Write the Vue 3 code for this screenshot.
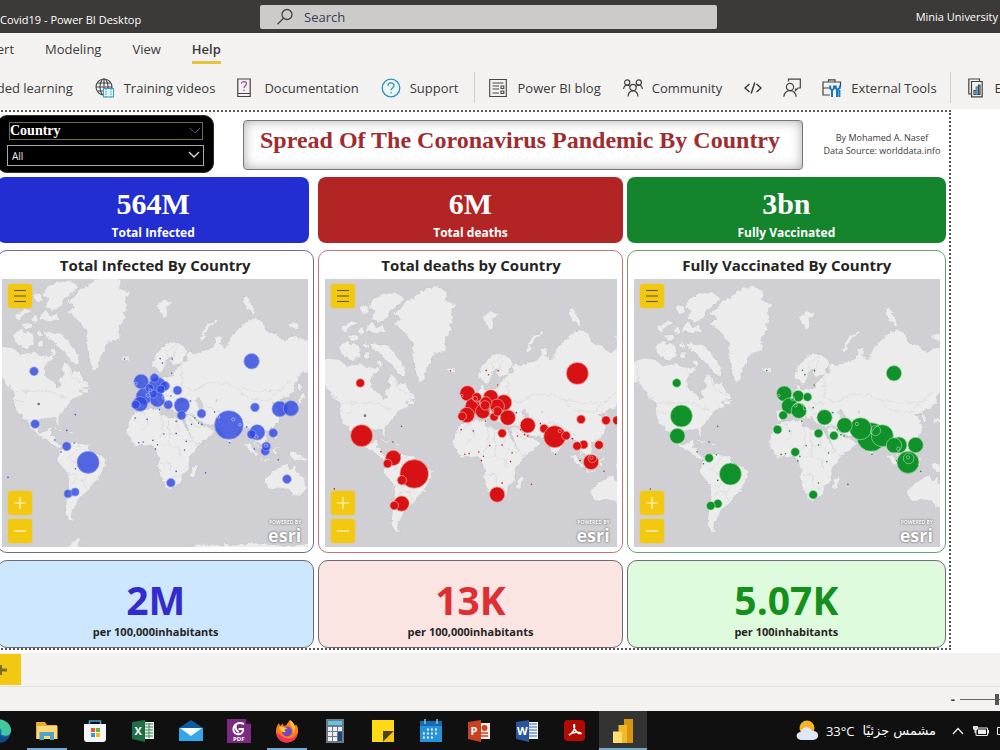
<script setup>
import { ref } from 'vue'

const query = ref('')
const zoom = ref(36)

const land = [
  // Greenland and the Arctic archipelago
  'M302 95L337 90 367 105 357 130 392 145 377 165 382 185 372 205 377 220 357 240 360 285 327 290 310 325 300 345 292 375 279 375 267 350 262 320 257 255 240 232 204 203 220 185 204 172 225 150 257 125Z',
  'M142 125L172 110 212 110 237 125 219 145 192 165 182 190 152 200 134 184 146 165 127 150Z',
  'M98 150L122 140 130 165 118 176 104 168ZM44 215L70 195 92 192 96 206 70 212 50 232ZM92 225L108 210 118 222 106 236ZM120 205L145 198 150 214 170 206 178 224 150 232 122 226ZM66 238L92 234 98 250 72 252Z',
  'M37 272L60 255 82 262 100 270 104 300 82 312 58 304 45 296ZM108 262L124 256 130 272 118 282ZM110 290L128 290 130 306 114 308ZM134 258L160 262 190 268 202 290 226 318 236 338 232 362 212 352 196 326 170 304 152 286 136 280ZM148 312L168 312 172 328 154 330Z',
  // North and Central America
  'M-30 318L-14 310 6 305 40 310 65 328 100 322 130 338 158 326 165 343 145 354 132 372 140 398 162 410 170 430 180 425 176 405 190 392 184 366 196 352 212 366 218 386 234 372 246 396 265 418 262 434 236 438 254 448 228 458 206 475 200 490 186 505 174 522 179 542 172 542 164 522 140 520 116 526 108 546 120 565 138 562 147 550 156 552 150 570 166 575 166 590 180 604 192 600 194 608 176 612 158 600 138 584 110 572 94 550 84 532 78 524 86 548 76 524 60 510 45 490 38 462 42 442 28 430 4 400 -10 384 -30 375Z',
  'M160 548L184 552 200 558 186 560 166 554ZM206 560L222 562 218 568 206 566ZM246 428L266 430 264 446 248 444Z',
  // South America
  'M190 600L215 590 235 595 260 600 275 622 300 630 319 645 312 665 302 690 295 706 276 722 264 740 250 750 240 757 236 770 222 785 216 805 214 815 224 830 206 826 194 805 197 775 203 740 208 710 205 688 185 666 170 645 175 625 187 612Z',
  // Africa and Madagascar
  'M400 505L425 495 455 492 480 492 482 510 505 515 530 520 545 520 556 545 568 565 580 587 607 580 600 600 578 625 564 645 568 670 546 690 545 706 528 725 505 735 494 725 480 690 471 665 478 640 465 620 460 605 430 600 405 603 385 580 378 555 390 530Z',
  'M590 655L592 670 580 700 570 696 572 675Z',
  // Arabia
  'M553 515L580 512 590 530 608 545 625 546 641 560 632 575 610 590 590 600 578 590 565 560Z',
  // Europe and Asia
  'M402 462L436 466 432 446 418 440 440 430 456 414 462 388 470 384 474 396 492 400 512 394 520 380 536 368 546 350 560 345 560 318 584 328 602 318 626 314 642 300 650 272 664 276 660 300 676 312 688 292 695 270 722 245 745 225 768 218 792 234 796 260 828 266 850 290 878 274 930 290 930 385 902 386 896 404 880 420 884 440 862 458 838 466 850 480 852 500 842 498 836 474 822 474 832 490 838 512 836 532 818 550 796 560 800 584 792 604 778 594 768 588 776 618 768 612 758 572 742 548 734 546 714 560 700 582 690 602 678 590 664 560 650 546 634 540 614 538 596 528 580 512 556 508 530 506 514 494 508 482 504 496 492 476 478 462 492 484 484 490 468 468 454 466 438 476 430 492 404 492Z',
  'M454 366L458 340 478 316 494 298 516 290 540 300 560 318 552 346 530 362 514 360 516 336 506 340 494 366 484 388 474 376 464 372Z',
  'M422 388L432 390 432 404 442 418 436 426 420 428 424 412 416 400ZM404 410L416 406 416 424 404 426ZM358 340L372 332 388 338 384 350 366 352Z',
  'M466 180L490 166 518 168 512 182 498 188 506 210 490 222 482 204ZM726 158L740 152 748 170 766 196 764 210 744 196 730 176ZM866 238L884 232 898 242 884 252 870 248Z',
  'M600 290L604 268 616 244 650 222 652 228 624 248 614 268 612 288Z',
  // Pacific islands and Australia
  'M896 410L904 420 900 446 894 430ZM900 452L918 446 914 462 904 468 896 490 874 504 870 498 888 484ZM814 552L826 560 830 584 822 588ZM730 590L744 596 776 630 770 638 748 618ZM774 640L812 644 808 650 778 646ZM784 608L806 590 814 604 808 626 790 624ZM818 606L836 604 826 614 832 630 820 628ZM866 620L886 624 912 634 926 652 904 646 884 648 868 632Z',
  'M795 700L802 690 830 674 850 658 862 660 870 676 880 654 890 680 912 704 918 728 902 755 880 752 866 734 842 730 806 736 796 718ZM892 764L904 764 898 774Z',
  'M200 910L228 884 250 876 232 896 240 912ZM560 912L600 898 700 900 770 894 850 904 930 896 930 912Z'
]

const water = 'M528 466L545 458 566 466 570 474 550 474 534 474ZM584 466L600 458 604 474 612 496 602 502 594 484ZM640 464L652 462 650 474Z'
const borders = 'M-14 310V384M42 440H150L175 450 200 462M40 462L75 470M78 524L108 534M196 350L220 400 260 420M205 640L225 620 240 600M208 690L230 690 240 670 225 650 205 640M215 720L230 700 250 710 262 740M250 710L262 700 262 690M430 505L400 530M430 498L445 540 420 560M482 510L490 560 470 590M505 516V600M530 520L532 568 505 568M545 580L575 590M490 600L540 610 540 640M480 655H510V690M520 700L545 690M528 500L560 500 580 512M560 515L585 545 625 548M580 440L620 415 680 415 710 430 770 440 840 435 870 410M710 430L740 460 800 470 840 435M610 480L650 500 690 500 720 520 750 535M640 540L660 510M500 405L510 440 545 440M470 410L490 440 520 480M440 466L460 448M545 350V420L580 440M494 366L500 320 530 300M520 340L530 310'

const dots = [[373, 343], [226, 510], [200, 557], [164, 586], [183, 622], [226, 672], [222, 595], [24, 698], [405, 520], [441, 524], [491, 568], [528, 566], [416, 594], [429, 592], [458, 587], [472, 600], [466, 613], [558, 590], [553, 616], [528, 680], [616, 684], [528, 530], [574, 539], [595, 535], [605, 539], [584, 520], [643, 502], [571, 469], [516, 343], [487, 355], [480, 342], [515, 386], [512, 454], [478, 495], [688, 594], [762, 613], [834, 645], [739, 547]]

const maps = [
  {
    key: 'infected', title: 'Total Infected By Country', view: '6 100 918 810', shift: [0, 0],
    bubbles: [[102, 380, 13], [105, 538, 13], [200, 605, 13], [264, 653, 33], [204, 747, 12], [225, 742, 12], [512, 714, 13], [754, 350, 23], [686, 541, 43], [764, 488, 13], [838, 493, 23], [872, 491, 23], [604, 507, 13], [545, 482, 23], [544, 512, 13], [532, 437, 13], [423, 411, 22], [472, 424, 26], [432, 455, 24], [420, 478, 22], [407, 480, 13], [472, 465, 22], [463, 400, 13], [494, 424, 14], [448, 430, 12], [482, 434, 12], [459, 448, 12], [504, 480, 13], [771, 563, 23], [754, 569, 13], [819, 565, 13], [795, 619, 13], [798, 605, 13], [860, 703, 13]],
    rings: [[407, 417, 4], [451, 437, 5], [444, 452, 6], [499, 464, 5], [490, 458, 4], [508, 460, 4], [699, 524, 5], [719, 540, 4], [655, 517, 4], [797, 603, 5], [768, 576, 5]]
  },
  {
    key: 'deaths', title: 'Total deaths by Country', view: '-4 65 875 810', shift: [-43, -35],
    bubbles: [[145, 415, 13], [149, 573, 33], [244, 640, 23], [227, 657, 13], [307, 688, 43], [270, 707, 14], [269, 777, 23], [247, 783, 13], [556, 750, 23], [797, 386, 33], [467, 446, 23], [537, 457, 22], [576, 474, 24], [484, 485, 24], [513, 500, 22], [556, 485, 22], [495, 458, 14], [522, 474, 18], [520, 482, 14], [465, 511, 23], [451, 515, 13], [547, 516, 13], [557, 500, 14], [588, 519, 23], [571, 566, 13], [648, 542, 23], [697, 552, 13], [729, 576, 33], [763, 573, 13], [808, 524, 13], [883, 527, 13], [916, 527, 13], [816, 600, 13], [796, 604, 13], [862, 601, 13], [838, 652, 23]],
    rings: [[450, 453, 4], [490, 462, 7], [500, 474, 5], [540, 500, 6], [533, 498, 4], [744, 559, 5], [842, 641, 13], [839, 639, 5]]
  },
  {
    key: 'vaccinated', title: 'Fully Vaccinated By Country', view: '-25 65 918 810', shift: [-64, -35],
    bubbles: [[167, 415, 13], [181, 514, 33], [169, 574, 23], [264, 640, 13], [328, 688, 33], [290, 777, 13], [269, 783, 13], [576, 750, 13], [818, 386, 23], [489, 447, 23], [531, 454, 17], [559, 457, 13], [505, 484, 24], [533, 498, 23], [486, 512, 13], [610, 518, 23], [469, 555, 13], [592, 566, 13], [638, 573, 13], [522, 622, 13], [750, 577, 43], [718, 552, 33], [670, 542, 23], [783, 573, 33], [833, 601, 24], [818, 602, 23], [883, 601, 23], [860, 653, 33]],
    rings: [[473, 453, 4], [515, 462, 6], [523, 482, 5], [545, 478, 5], [552, 490, 6], [707, 538, 5], [763, 558, 15], [831, 612, 5], [862, 641, 16], [860, 638, 5]]
  }
]

const totals = [
  { key: 'infected', value: '564M', label: 'Total Infected' },
  { key: 'deaths', value: '6M', label: 'Total deaths' },
  { key: 'vaccinated', value: '3bn', label: 'Fully Vaccinated' }
]
const rates = [
  { key: 'infected', value: '2M', label: 'per 100,000inhabitants' },
  { key: 'deaths', value: '13K', label: 'per 100,000inhabitants' },
  { key: 'vaccinated', value: '5.07K', label: 'per 100inhabitants' }
]
</script>

<template>
  <div class="desktop">
    <header class="titlebar">
      <span class="file">Covid19 - Power BI Desktop</span>
      <label class="search">
        <svg width="18" height="18" viewBox="0 0 18 18" fill="none" stroke="#444" stroke-width="1.3"><circle cx="11" cy="6.5" r="5" /><path d="M7.5 10.2L1.5 16.2" /></svg>
        <input v-model="query" type="text" placeholder="Search" aria-label="Search">
      </label>
      <span class="account">Minia University</span>
    </header>

    <nav class="tabs">
      <button type="button">Insert</button>
      <button type="button">Modeling</button>
      <button type="button">View</button>
      <button type="button" class="active">Help</button>
    </nav>

    <div class="ribbon">
      <button type="button" class="guided">Guided learning</button>
      <button type="button" class="tool">
        <svg width="20" height="20" viewBox="0 0 20 20" fill="none" stroke="#444" stroke-width="1.1"><circle cx="9" cy="9" r="8" /><ellipse cx="9" cy="9" rx="4" ry="8" /><path d="M1 9H17M2.5 5H15.5M2.5 13H9M9 1V17" /><rect x="8.5" y="10.5" width="10" height="8.5" fill="#e4f6fb" stroke="#3b9fbd" /><path d="M11 10.5V19M16 10.5V19" stroke="#3b9fbd" stroke-dasharray="1.5 1" /></svg>
        Training videos
      </button>
      <button type="button" class="tool docs">
        <svg width="14" height="20" viewBox="0 0 14 20" fill="none" stroke="#444" stroke-width="1.2"><path d="M.8 1H13.2V18.5H.8ZM.8 15.5H13.2" /><path d="M4.5 5.7C4.5 2.8 9.5 2.8 9.5 5.8 9.5 7.8 7 7.8 7 10M7 11.5V13" stroke="#a04aa8" /></svg>
        Documentation
      </button>
      <button type="button" class="tool">
        <svg width="20" height="20" viewBox="0 0 20 20" fill="none" stroke="#2f8fb8" stroke-width="1.3"><circle cx="10" cy="10" r="8.8" fill="#eaf7fb" /><path d="M7 7.8C7 4 13 4 13 7.6 13 10 10 9.8 10 12.3M10 14V15.6" /></svg>
        Support
      </button>
      <i class="divider"></i>
      <button type="button" class="tool blog">
        <svg width="18" height="20" viewBox="0 0 18 20" fill="none" stroke="#444" stroke-width="1.1"><path d="M.7 1.5H17.3V18.5H.7ZM3.5 5H14.5M3.5 8H10M3.5 11H10M3.5 15H10M12 8H14.8V10.5H12ZM12 13H14.8V15.5H12Z" /></svg>
        Power BI blog
      </button>
      <button type="button" class="tool">
        <svg width="20" height="20" viewBox="0 0 20 20" fill="none" stroke="#444" stroke-width="1.2"><circle cx="4.2" cy="4.5" r="2.6" /><circle cx="15.8" cy="4.5" r="2.6" /><circle cx="10" cy="9.5" r="3.2" /><path d="M.6 11C1 8.5 2.5 7.2 4.2 7.2S6.3 7.6 7 8.5M19.4 11C19 8.5 17.5 7.2 15.8 7.2S13.7 7.6 13 8.5M5 18.5C5.3 15 7.5 12.8 10 12.8S14.7 15 15 18.5" /></svg>
        Community
      </button>
      <button type="button" class="tool" aria-label="Developers">
        <svg width="18" height="20" viewBox="0 0 18 20" fill="none" stroke="#333" stroke-width="1.4"><path d="M5.5 6L1 10 5.5 14M12.5 6L17 10 12.5 14M10.8 4.5L7.2 15.5" /></svg>
      </button>
      <button type="button" class="tool idea" aria-label="Submit an idea">
        <svg width="18" height="20" viewBox="0 0 18 20" fill="none" stroke="#444" stroke-width="1.2"><circle cx="7" cy="9" r="3.6" /><path d="M.8 18.8C1.2 15 3.8 12.6 7 12.6S12.8 15 13.2 18.8M5.5 3.5V1.2H17.3V10H15L12.5 12.5V10.5" /></svg>
      </button>
      <button type="button" class="tool idea">
        <svg width="20" height="20" viewBox="0 0 20 20" fill="none" stroke="#444" stroke-width="1.2"><path d="M6.5 4V1.8H13V4M8 17H1V4H18.5V9M1 10H8" /><path d="M8.2 7.5V10C8.2 11.5 10 11.5 10 12.5V19M12 7.5V10C12 11.5 10.4 11.5 10.4 12.5M15 19V12M13.8 7.5V10L15.2 11.8 17.8 10V7.5M17.4 12V19" stroke="#1677bd" stroke-width="2" /></svg>
        External Tools
      </button>
      <i class="divider last"></i>
      <button type="button" class="tool examples">
        <svg width="15" height="20" viewBox="0 0 15 20" fill="none" stroke="#444" stroke-width="1.2"><path d="M3.5 3.5H14.2V18.8H3.5ZM11.5 3.5V1H.8V16H3.5" /><path d="M6 12.5H8V16.5H6Z" stroke="#444" /><path d="M8.2 9H10.2V16.5H8.2Z" stroke="#2a7fc0" fill="#9fd0f0" /><path d="M10.5 7H12V16.5H10.5Z" /></svg>
        Examples
      </button>
    </div>

    <main class="canvas">
      <div class="page">
        <section class="top">
          <div class="slicer">
            <label for="country">Country
              <svg width="12" height="8" viewBox="0 0 12 8" fill="none" stroke="#555"><path d="M1 1L6 6 11 1" /></svg>
            </label>
            <div class="pick">
              <select id="country"><option>All</option></select>
              <svg width="12" height="8" viewBox="0 0 12 8" fill="none" stroke="#ddd" stroke-width="1.3"><path d="M1 1L6 6 11 1" /></svg>
            </div>
          </div>
          <h1>Spread Of The Coronavirus Pandemic By Country</h1>
          <p class="credit">By Mohamed A. Nasef<br>Data Source: worlddata.info</p>
        </section>

        <section class="row totals">
          <article v-for="t in totals" :key="t.key" :class="t.key">
            <strong>{{ t.value }}</strong>
            <span>{{ t.label }}</span>
          </article>
        </section>

        <section class="row maps">
          <article v-for="m in maps" :key="m.key" :class="m.key">
            <h2>{{ m.title }}</h2>
            <div class="map">
              <svg class="world" :viewBox="m.view" preserveAspectRatio="xMidYMid slice">
                <defs>
                  <filter :id="'coast-' + m.key" x="-5%" y="-5%" width="110%" height="110%">
                    <feTurbulence type="fractalNoise" baseFrequency="0.07" numOctaves="3" seed="4" />
                    <feDisplacementMap in="SourceGraphic" scale="16" xChannelSelector="R" yChannelSelector="G" />
                  </filter>
                </defs>
                <g :filter="'url(#coast-' + m.key + ')'">
                  <path v-for="(d, i) in land" :key="i" class="land" :d="d" />
                  <path class="borders" :d="borders" />
                  <path class="water" :d="water" />
                </g>
                <circle v-for="(d, i) in dots" :key="'d' + i" class="dot" :cx="d[0]" :cy="d[1]" r="2.4" />
                <circle v-if="m.key !== 'vaccinated'" cx="116" cy="478" r="4" fill="#77737a" />
                <g :transform="`translate(${m.shift[0]} ${m.shift[1]})`">
                  <circle v-for="(b, i) in m.bubbles" :key="'b' + i" class="bubble" :cx="b[0]" :cy="b[1]" :r="b[2]" />
                  <circle v-for="(b, i) in m.rings" :key="'r' + i" class="ring" :cx="b[0]" :cy="b[1]" :r="b[2]" />
                </g>
              </svg>
              <button type="button" class="menu" aria-label="Map menu">
                <svg width="12" height="12" viewBox="0 0 12 12" stroke="#5b5312"><path d="M0 .5H12M0 6H12M0 11.5H12" /></svg>
              </button>
              <div class="zoomer">
                <button type="button" aria-label="Zoom in"><svg width="12" height="12" viewBox="0 0 12 12" stroke="#fff9cf" stroke-width="1.2"><path d="M0 6H12M6 0V12" /></svg></button>
                <button type="button" aria-label="Zoom out"><svg width="12" height="12" viewBox="0 0 12 12" stroke="#fff9cf" stroke-width="1.2"><path d="M0 6H12" /></svg></button>
              </div>
              <div class="esri"><small>POWERED BY</small><b>esri</b></div>
            </div>
          </article>
        </section>

        <section class="row rates">
          <article v-for="r in rates" :key="r.key" :class="r.key">
            <strong>{{ r.value }}</strong>
            <span>{{ r.label }}</span>
          </article>
        </section>
      </div>
    </main>

    <div class="pagebar">
      <button type="button" aria-label="New page"><svg width="14" height="12" viewBox="0 0 14 12" stroke="#7b6c22" stroke-width="3"><path d="M1 6H13M6.5 1V11" /></svg></button>
    </div>
    <div class="statusbar">
      <span>-</span>
      <input v-model="zoom" type="range" min="0" max="100" aria-label="Zoom">
    </div>

    <footer class="taskbar">
      <div class="apps">
        <button type="button" aria-label="Edge"><svg viewBox="0 0 24 24"><circle cx="12" cy="12" r="11.5" fill="#1b6fb5" /><path d="M3 4C12-4 25 3 24 12 24 17 17 18 14 15 16 10 11 5 3 9Z" fill="#3fc7a0" /><path d="M13 14C14 19 20 18 23 16 20 24 12 25 8 21 4 17 8 10 13 14Z" fill="#114a8b" /></svg></button>
        <button type="button" class="running" aria-label="File Explorer"><svg viewBox="0 0 24 24"><path d="M1 3H10L12 6H22V20H1Z" fill="#e6a93a" /><path d="M2 7H22.5V20H2Z" fill="#fbd872" /><path d="M4.5 13H19V21H15V17H9V21H4.5Z" fill="#4fa2c9" /></svg></button>
        <button type="button" aria-label="Store"><svg viewBox="0 0 24 24"><path d="M6.5 6V2H17.5V6" fill="none" stroke="#3d9fd4" stroke-width="1.6" /><path d="M1 5H23V20Q23 23 20 23H4Q1 23 1 20Z" fill="#f5f5f5" /><path d="M8 9H12V13H8Z" fill="#e8582c" /><path d="M13 9H17V13H13Z" fill="#6cb33f" /><path d="M8 14H12V18H8Z" fill="#2a9fd8" /><path d="M13 14H17V18H13Z" fill="#f3b81f" /></svg></button>
        <button type="button" aria-label="Excel"><svg viewBox="0 0 24 24"><path d="M12 3H23V20H12Z" fill="#e8f2ea" /><path d="M14 5H22M14 8H22M14 11H22M14 14H22M14 17H22M18 4V19" stroke="#3e8a5b" /><path d="M1 3L14 1V23L1 20Z" fill="#1e7044" /><text x="3.5" y="16" class="glyph">X</text></svg></button>
        <button type="button" aria-label="Mail"><svg viewBox="0 0 24 24"><path d="M0 9L12 1 24 9V20H0Z" fill="#0f5a9f" /><path d="M0 8.5L12 15 24 8.5V22H0Z" fill="#32a8ea" /><path d="M1 9H23L12 17Z" fill="#f4fbff" /></svg></button>
        <button type="button" aria-label="PDF editor"><svg viewBox="0 0 24 24"><path d="M0 0H19L24 5V24H0Z" fill="#7a2b7f" /><path d="M19 0V5H24Z" fill="#311334" /><path d="M17 5C11 2 6 6 6.5 11 7 16 14 17 16 12V10H11.5M9 6C8 9 9 12 12 13" fill="none" stroke="#fff" stroke-width="2" /><text x="6" y="22" class="tiny">PDF</text></svg></button>
        <button type="button" class="running" aria-label="Firefox"><svg viewBox="0 0 24 24"><path d="M12 23.5C5 23.5 1 18 1 12.5 1 9 2 6 4 4L5 7 8 4.500 8.500 7C12 7 12 4 15 1 15 4 18 5 19.500 7L21 5.500C23 8 23.500 10 23 13.500 22 20 17.500 23.500 12 23.500Z" fill="#ff7a22" /><path d="M2 14C2 21 8 24 13 23.300 19 22.500 22 18 22.500 14 20 18 17 20 13 19.500 7 19 4 14 2 14Z" fill="#f52f55" /><circle cx="12" cy="12.500" r="5" fill="#7048c5" /><path d="M4 8C8 7 10 9 13 9 9 10 9 12 11 13 7 14 4 11 4 8ZM15 1C14 6 19 8 18 14 22 10 20 4 15 1Z" fill="#ffc832" /></svg></button>
        <button type="button" aria-label="Calculator"><svg viewBox="0 0 24 24"><path d="M3 0H21V24H3Z" fill="#6d7b86" /><path d="M5 2H19V6H5Z" fill="#5bc5ec" /><path d="M5 8H9V12H5ZM10 8H14V12H10ZM15 8H19V12H15ZM5 13H9V17H5ZM10 13H14V17H10ZM5 18H9V22H5ZM10 18H14V22H10Z" fill="#eceff1" /><path d="M15 13H19V22H15Z" fill="#21477c" /></svg></button>
        <button type="button" aria-label="Sticky Notes"><svg viewBox="0 0 24 24"><path d="M1 1H23V23H1Z" fill="#ffd816" /><path d="M12 12H23L12 23Z" fill="#4a4212" /><path d="M23 12V23H12Z" fill="#f5c60c" /></svg></button>
        <button type="button" aria-label="Calendar"><svg viewBox="0 0 24 24"><path d="M1 2H23V23H1Z" fill="#2693d9" /><path d="M1 2H23V7H1Z" fill="#126cb0" /><path d="M6 0V5M18 0V5" stroke="#7dcbf4" stroke-width="1.5" /><path d="M8 10.500H20M4 14.500H20M4 18.500H16" stroke="#fff" stroke-width="1.800" stroke-dasharray="1.800 2.200" /></svg></button>
        <button type="button" aria-label="PowerPoint"><svg viewBox="0 0 24 24"><path d="M12 4H23V20H12Z" fill="#f7e9e4" /><circle cx="17.500" cy="9" r="3" fill="#cc4526" /><path d="M14 14H21M14 17H21" stroke="#cc4526" stroke-width="1.300" /><path d="M1 3L14 1V23L1 20Z" fill="#cb4023" /><text x="3.500" y="16" class="glyph">P</text></svg></button>
        <button type="button" aria-label="Word"><svg viewBox="0 0 24 24"><path d="M12 3H23V20H12Z" fill="#eef4fb" /><path d="M14 5H22M14 8H22M14 11H22M14 14H22M14 17H22" stroke="#3a6bb0" /><path d="M1 3L14 1V23L1 20Z" fill="#2a5699" /><text x="2" y="16" class="glyph">W</text></svg></button>
        <button type="button" aria-label="Acrobat"><svg viewBox="0 0 24 24"><rect x="1" y="1" width="21" height="21" rx="4" fill="#b30b00" /><path d="M6 16C10 14 12 10 11.500 6 11 4.500 9.800 7 12 10.500 13.500 13 16 15 18 14.500 18 12.500 10 12.500 6 16Z" fill="none" stroke="#fff" stroke-width="1.500" /></svg></button>
        <button type="button" class="current" aria-label="Power BI"><svg viewBox="0 0 24 24"><path d="M13 0H22V24H13Z" fill="#d9950f" /><path d="M7.500 6H16V24H7.500Z" fill="#f0b929" /><path d="M2 12.500H11V24H2Z" fill="#ffdf70" /></svg></button>
      </div>
      <div class="tray">
        <svg width="23" height="21" viewBox="0 0 23 21"><circle cx="11" cy="8" r="7.500" fill="#f8b523" /><path d="M6 20C-1 20-1 12 5 12 6 6 14 6 16 11 24 10 24 20 17 20Z" fill="#dce8f5" /></svg>
        <span class="temp">33°C</span>
        <span class="sky" dir="rtl" lang="ar">مشمس جزئيًا</span>
        <svg width="12" height="8" viewBox="0 0 12 8" fill="none" stroke="#eee" stroke-width="1.300"><path d="M1 7L6 1.500 11 7" /></svg>
        <svg class="battery" width="16" height="12" viewBox="0 0 16 12"><path d="M5 3H14.500V10.500H3V8" fill="none" stroke="#eee" /><path d="M5 4.500H13V9H5ZM15 5H16V8.500H15Z" fill="#eee" /><path d="M0 1H5V4L3.500 5.500V8H1.500V5.500L0 4Z" fill="#ddd" /></svg>
        <svg width="8" height="10" viewBox="0 0 8 10" fill="none" stroke="#eee"><path d="M.5 1.500H8M.5 1.500V8.500H8" /></svg>
      </div>
    </footer>
  </div>
</template>

<style>
body { margin: 0; overflow: hidden; }
</style>

<style scoped>
* { box-sizing: border-box; }
.desktop { min-height: 100vh; display: flex; flex-direction: column; overflow: hidden; background: #f3f2f1; color: #3b3a39; font: 13px/20px "Open Sans", "Noto Sans", sans-serif; }
button { border: 0; padding: 0; margin: 0; background: none; font: inherit; color: inherit; white-space: nowrap; }
svg { flex: none; }
h1, h2, p { margin: 0; }

.titlebar { height: 33px; display: grid; grid-template-columns: 260px minmax(0, 1fr) 283px; align-items: center; background: #3b3a39; color: #fff; font-size: 11px; }
.file { padding-top: 7px; white-space: nowrap; }
.search { height: 24px; display: flex; align-items: center; gap: 10px; padding-left: 16px; border-radius: 2px; background: #cccbc9; }
.search input { flex: 1; min-width: 0; border: 0; padding: 0; outline: 0; background: none; font: 13px/20px "Open Sans", sans-serif; color: #34405a; }
.search input::placeholder { color: #34405a; opacity: 1; }
.account { text-align: right; padding-right: 2px; }

.tabs { display: flex; gap: 31px; height: 35px; align-items: center; margin-left: -21px; }
.tabs button { height: 26px; border-bottom: 3px solid transparent; }
.tabs .active { font-weight: 600; border-color: #e3c63c; }

.ribbon { display: flex; align-items: center; height: 41px; padding-bottom: 2px; white-space: nowrap; }
.ribbon > * { flex: none; }
.guided { margin-left: -24px; }
.tool { display: flex; align-items: center; gap: 9px; margin-left: 22px; }
.docs { gap: 13px; }
.divider { width: 1px; height: 31px; margin-left: 15px; background: #d2d0ce; }
.divider.last { margin-left: 13px; }
.blog { margin-left: 14px; gap: 11px; }
.idea { margin-left: 21px; }
.examples { margin-left: 17px; gap: 12px; }

.canvas { flex: 1; display: flex; overflow: hidden; background: #fff; }
.page { flex: 1; display: flex; flex-direction: column; margin: 1px 49px 3px -3px; border: 2px dotted #555; border-left: 0; padding-right: 3px; }
.top { display: flex; align-items: center; height: 65px; }
.slicer { width: 217px; height: 58px; margin-top: -2px; padding: 6px 9px; border: 1px solid #33331a; border-radius: 10px; background: #000; color: #fff; }
.slicer label { height: 18px; display: flex; align-items: center; justify-content: space-between; margin: 0 1px 5px 2px; border: 1px solid #6f7040; padding-right: 1px; font: bold 14px/16px "Liberation Serif", serif; }
.pick { position: relative; display: flex; align-items: center; height: 21px; border: 1px solid #aaa; }
.pick select { flex: 1; appearance: none; border: 0; padding: 2px 4px 0; background: #000; color: #eee; font: 10px/16px "Open Sans", sans-serif; }
.pick svg { position: absolute; right: 3px; pointer-events: none; }
h1 { flex: 1; height: 50px; margin-left: 29px; padding-right: 6px; border: 1px solid #777; border-radius: 4px; box-shadow: inset 0 0 12px #aaa; color: #a02c30; font: bold 24px/38px "Liberation Serif", serif; text-align: center; white-space: nowrap; }
.credit { width: 143px; text-align: center; font-size: 9px; line-height: 13px; padding-left: 15px; margin-top: -2px; white-space: nowrap; }

.row { display: grid; grid-template-columns: 317fr 304fr 319fr; gap: 4px; }
.row article { min-width: 0; text-align: center; }
.totals article { height: 66px; display: flex; flex-direction: column; align-items: center; border-radius: 8px; color: #fff; }
.totals .infected { background: #222dd2; margin-right: 5px; }
.totals .deaths { background: #b32425; }
.totals .vaccinated { background: #14842d; }
.totals strong { margin-top: 9px; font: bold 30px/36px "Liberation Serif", serif; }
.totals span { font-size: 12px; font-weight: 700; line-height: 22px; }

.maps { flex: 1; margin: 7px 0; }
.maps article { display: flex; flex-direction: column; border: 1px solid; border-radius: 10px; padding: 0 5px 5px 6px; }
.maps .infected { border-color: #6a6b9c; padding-left: 4px; }
.maps .deaths { border-color: #c9707a; }
.maps .vaccinated { border-color: #66a56c; }
h2 { font-size: 15px; line-height: 28px; font-weight: 700; color: #252423; white-space: nowrap; }
.map { position: relative; flex: 1; min-height: 200px; background: #d0cfd4; overflow: hidden; }
.world { position: absolute; left: 0; top: 0; width: 100%; height: 100%; }
.land { fill: #ececec; stroke: #bdbcc0; stroke-width: 1.500; }
.water { fill: #d0cfd4; }
.borders { fill: none; stroke: #d4d4d6; stroke-width: 2; }
.infected .bubble { fill: #3048e2; fill-opacity: .82; stroke: #8ea0f2; }
.deaths .bubble { fill: #d81214; stroke: #f7a9a5; }
.vaccinated .bubble { fill: #11912a; stroke: #a5e0ab; }
.bubble { stroke-width: 2; }
.ring { fill: none; stroke: #fff; stroke-opacity: .6; stroke-width: 2; }
.infected .dot { fill: #3b4fd0; }
.deaths .dot { fill: #c22; }
.vaccinated .dot { fill: #178c2c; }
.menu, .zoomer button { width: 24px; height: 24px; display: flex; align-items: center; justify-content: center; border-radius: 3px; background: #f2c811; box-shadow: 0 0 2px #e8c83c; }
.menu { position: absolute; left: 6px; top: 5px; }
.zoomer { position: absolute; left: 6px; bottom: 4px; display: grid; gap: 4px; }
.esri { position: absolute; right: 7px; bottom: 2px; display: grid; color: #fff; font-family: "Open Sans", sans-serif; text-shadow: 0 0 2px #777, 0 0 2px #777; text-align: right; }
.esri small { font-size: 5px; line-height: 6px; font-weight: 700; }
.esri b { font-size: 18px; line-height: 20px; }

.rates article { height: 88px; display: flex; flex-direction: column; align-items: center; border: 1px solid #6d6d70; border-radius: 10px; }
.rates .infected { background: #cde7fe; }
.rates .deaths { background: #fbe5e3; }
.rates .vaccinated { background: #dffbdd; }
.rates strong { margin-top: 14px; font-size: 39px; line-height: 49px; }
.rates span { font-size: 11px; font-weight: 700; line-height: 16px; color: #252423; }
.rates .infected strong { color: #342bcd; }
.rates .deaths strong { color: #e02f34; }
.rates .vaccinated strong { color: #16901c; }

.pagebar { height: 34px; border-bottom: 1px solid #e3e2e0; }
.pagebar button { display: flex; align-items: center; width: 21px; height: 31px; margin-top: 1px; padding: 0; background: #f2c811; }
.pagebar svg { margin-left: -6px; }
.statusbar { height: 24px; display: flex; align-items: center; justify-content: flex-end; gap: 5px; margin-right: -60px; }
.statusbar span { font-weight: 700; }
.statusbar input { appearance: none; width: 100px; height: 12px; margin: 0; background: linear-gradient(#666, #666) center / 100% 1px no-repeat; }
.statusbar input::-webkit-slider-thumb { appearance: none; width: 4px; height: 11px; background: #555; }

.taskbar { height: 39px; display: flex; justify-content: space-between; background: #101010; color: #fff; }
.apps { display: flex; margin-left: -25px; }
.apps button { position: relative; width: 48px; height: 39px; display: flex; align-items: center; justify-content: center; }
.apps svg { width: 24px; height: 24px; }
.running::after, .current::after { content: ""; position: absolute; left: 4px; right: 4px; bottom: 0; height: 2px; background: #76a9d8; }
.apps .current { background: #333; }
.current::after { left: 0; right: 0; }
.glyph { fill: #fff; font: bold 11px "Open Sans", sans-serif; }
.tiny { fill: #fff; font: bold 6px "Open Sans", sans-serif; }
.tray { display: flex; align-items: center; margin-right: -5px; }
.temp { margin-left: 7px; font-size: 13px; }
.sky { margin: 0 16px 0 8px; font: 13px/20px "DejaVu Sans", sans-serif; white-space: nowrap; }
.battery { margin: 0 8px 0 9px; }
</style>
